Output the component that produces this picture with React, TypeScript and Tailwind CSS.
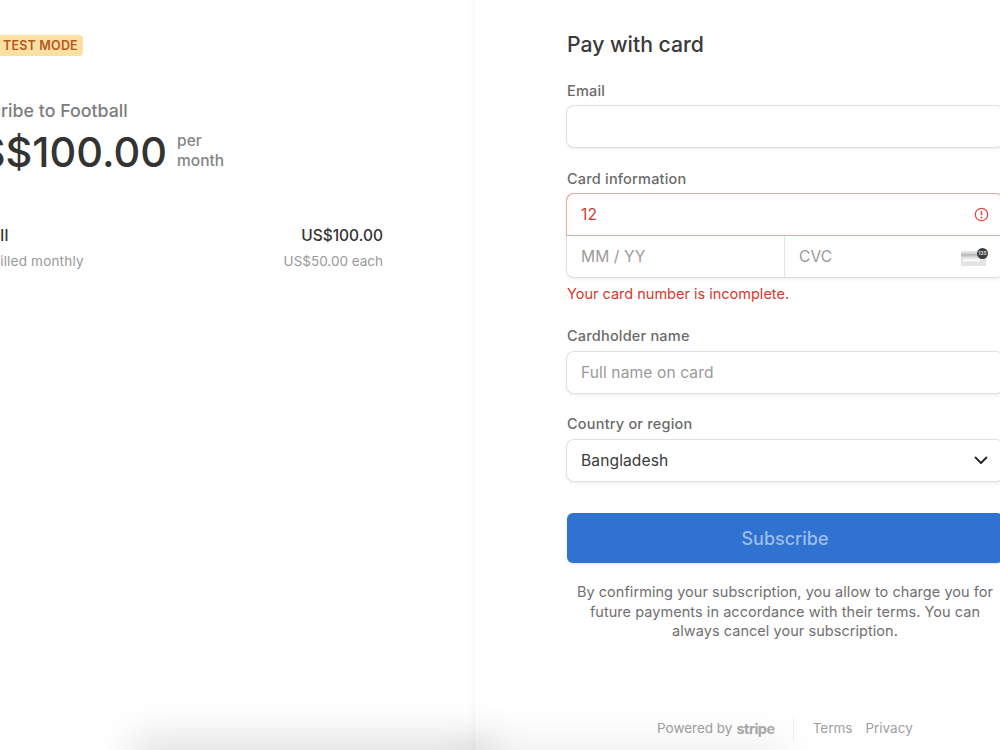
const inputBox =
  "bg-white rounded-[7px] shadow-[0_0_0_1px_#e0e0e0,0_2px_4px_rgba(0,0,0,0.07),0_1px_1.5px_rgba(0,0,0,0.05)]";
const fieldInput =
  "flex-1 min-w-0 bg-transparent outline-none text-[15.6px] tracking-[0.1px] placeholder:text-[#9a9a9a]";

function Label({ children }: { children: string }) {
  return (
    <div className="text-[14.5px] leading-[18px] font-medium tracking-[0.2px] text-[#6b6b6b] mb-[6px]">
      {children}
    </div>
  );
}

function CvcIcon() {
  return (
    <svg width="30" height="20" viewBox="0 0 30 20" className="shrink-0">
      <rect x="2" y="4" width="25" height="15" rx="1.5" fill="#e3e3e3" />
      <rect x="2" y="6.5" width="25" height="3" fill="#bdbdbd" />
      <rect x="4" y="12" width="17" height="2.5" fill="#fafafa" />
      <circle cx="23.5" cy="6.5" r="5.5" fill="#3e3e3e" />
      <text x="23.5" y="8.3" textAnchor="middle" fontSize="5" fontWeight="700" fill="#dddddd">
        135
      </text>
    </svg>
  );
}

function AlertIcon() {
  return (
    <svg width="15" height="15" viewBox="0 0 15 15" fill="none" className="shrink-0">
      <circle cx="7.5" cy="7.5" r="6.2" stroke="#df4a43" strokeWidth="1.3" />
      <rect x="6.8" y="3.8" width="1.4" height="4.6" rx="0.7" fill="#df4a43" />
      <circle cx="7.5" cy="10.5" r="0.9" fill="#df4a43" />
    </svg>
  );
}

function Summary() {
  return (
    <div className="w-[475px] h-full shrink-0 bg-white shadow-[inset_-6px_0_6px_-5px_rgba(0,0,0,0.05)] overflow-hidden">
      <div className="ml-[-52px] w-[435px] pt-[35px]">
        <div className="ml-[47px] w-fit h-[21px] pl-[8px] pr-[5px] rounded-[4px] bg-[#fbe0a3] text-[12.5px] leading-[21px] font-semibold tracking-[0.2px] text-[#b3591f]">
          TEST MODE
        </div>
        <div className="mt-[43px] text-[17.8px] leading-[24px] font-medium text-[#7d7d7d]">
          Subscribe to Football
        </div>
        <div className="mt-[4px] flex items-center gap-[10px]">
          <div className="text-[41.5px] leading-[50px] font-medium text-[#333333]">US$100.00</div>
          <div className="mb-[3px] text-[15.5px] leading-[20px] font-medium text-[#858585]">
            per
            <br />
            month
          </div>
        </div>
        <div className="mt-[49px] flex justify-between text-[15.5px] leading-[20px] font-medium text-[#333333]">
          <span className="tracking-[0.2px]">Football</span>
          <span>US$100.00</span>
        </div>
        <div className="mt-[6px] flex justify-between text-[13.5px] leading-[18px] text-[#999999]">
          <span className="tracking-[0.2px]">Qty 2, billed monthly</span>
          <span>US$50.00 each</span>
        </div>
      </div>
    </div>
  );
}

function PaymentForm() {
  return (
    <div className="flex-1 h-full bg-white pl-[92px]">
      <div className="w-[436px] pt-[30px]">
        <h1 className="text-[21.2px] leading-[28px] font-medium text-[#3a3a3a] mb-[24px]">
          Pay with card
        </h1>

        <Label>Email</Label>
        <div className={`${inputBox} h-[41px] flex items-center px-[14px]`}>
          <input className={`${fieldInput} text-[#3a3a3a]`} />
        </div>

        <div className="mt-[23px]">
          <Label>Card information</Label>
          <div className={`${inputBox} h-[83px] flex flex-col`}>
            <div className="relative z-10 h-[41px] flex items-center pl-[14px] pr-[14px] rounded-t-[7px] shadow-[0_0_0_1px_#eda6a1]">
              <input className={`${fieldInput} text-[#d5382f]`} defaultValue="12" />
              <AlertIcon />
            </div>
            <div className="flex-1 flex pt-[1px]">
              <div className="w-1/2 flex items-center px-[14px] border-r border-[#e3e3e3]">
                <input className={`${fieldInput} text-[#3a3a3a]`} placeholder="MM / YY" />
              </div>
              <div className="w-1/2 flex items-center pl-[14px] pr-[14px]">
                <input className={`${fieldInput} text-[#3a3a3a]`} placeholder="CVC" />
                <CvcIcon />
              </div>
            </div>
          </div>
          <div className="mt-[8px] text-[14.5px] leading-[18px] text-[#d5382f]">
            Your card number is incomplete.
          </div>
        </div>

        <div className="mt-[24px]">
          <div className="pb-[1px]">
            <Label>Cardholder name</Label>
          </div>
          <div className={`${inputBox} h-[41px] flex items-center px-[14px]`}>
            <input className={`${fieldInput} text-[#3a3a3a]`} placeholder="Full name on card" />
          </div>
        </div>

        <div className="mt-[22px]">
          <div className="pb-[1px]">
            <Label>Country or region</Label>
          </div>
          <div className={`${inputBox} h-[41px] flex items-center pl-[14px] pr-[14px]`}>
            <span className="flex-1 pt-[1px] text-[15.6px] tracking-[0.1px] text-[#3a3a3a]">Bangladesh</span>
            <svg width="14" height="9" viewBox="0 0 14 9" fill="none" className="mr-[1px]">
              <path d="M1.5 1.5 7 7l5.5-5.5" stroke="#222222" strokeWidth="1.8" strokeLinecap="round" strokeLinejoin="round" />
            </svg>
          </div>
        </div>

        <button className="mt-[32px] w-full h-[50px] rounded-[6px] bg-[#3072cf] text-[18px] font-medium text-[#9dbdec] shadow-[0_1px_2px_rgba(0,0,0,0.12)]">
          Subscribe
        </button>

        <p className="mt-[19px] text-center text-[14.5px] leading-[19.5px] tracking-[0.05px] text-[#707070]">
          By confirming your subscription, you allow to charge you for
          <br />
          future payments in accordance with their terms. You can
          <br />
          always cancel your subscription.
        </p>

        <div className="mt-[76px] ml-[90px] flex items-center h-[24px] text-[13.5px] text-[#a0a0a0]">
          <span>Powered by</span>
          <span className="ml-[4px] text-[14.5px] font-bold tracking-[-0.5px] text-[#aaaaaa]">stripe</span>
          <div className="w-px h-[24px] bg-[#eeeeee] ml-[18px] mr-[19px]" />
          <span>Terms</span>
          <span className="ml-[13px]">Privacy</span>
        </div>
      </div>
    </div>
  );
}

export default function App() {
  return (
    <div
      className="relative w-[1000px] h-[750px] flex overflow-hidden bg-white"
      style={{ fontFamily: "Inter, 'Liberation Sans', sans-serif" }}
    >
      <Summary />
      <PaymentForm />
      {/* soft shadows coming up from below the fold */}
      <div className="absolute left-[150px] top-[756px] w-[325px] h-[10px] shadow-[0_0_40px_18px_rgba(0,0,0,0.13)] pointer-events-none" />
      <div className="absolute left-[475px] top-[756px] w-[300px] h-[10px] shadow-[0_0_40px_14px_rgba(0,0,0,0.07)] pointer-events-none" />
    </div>
  );
}
